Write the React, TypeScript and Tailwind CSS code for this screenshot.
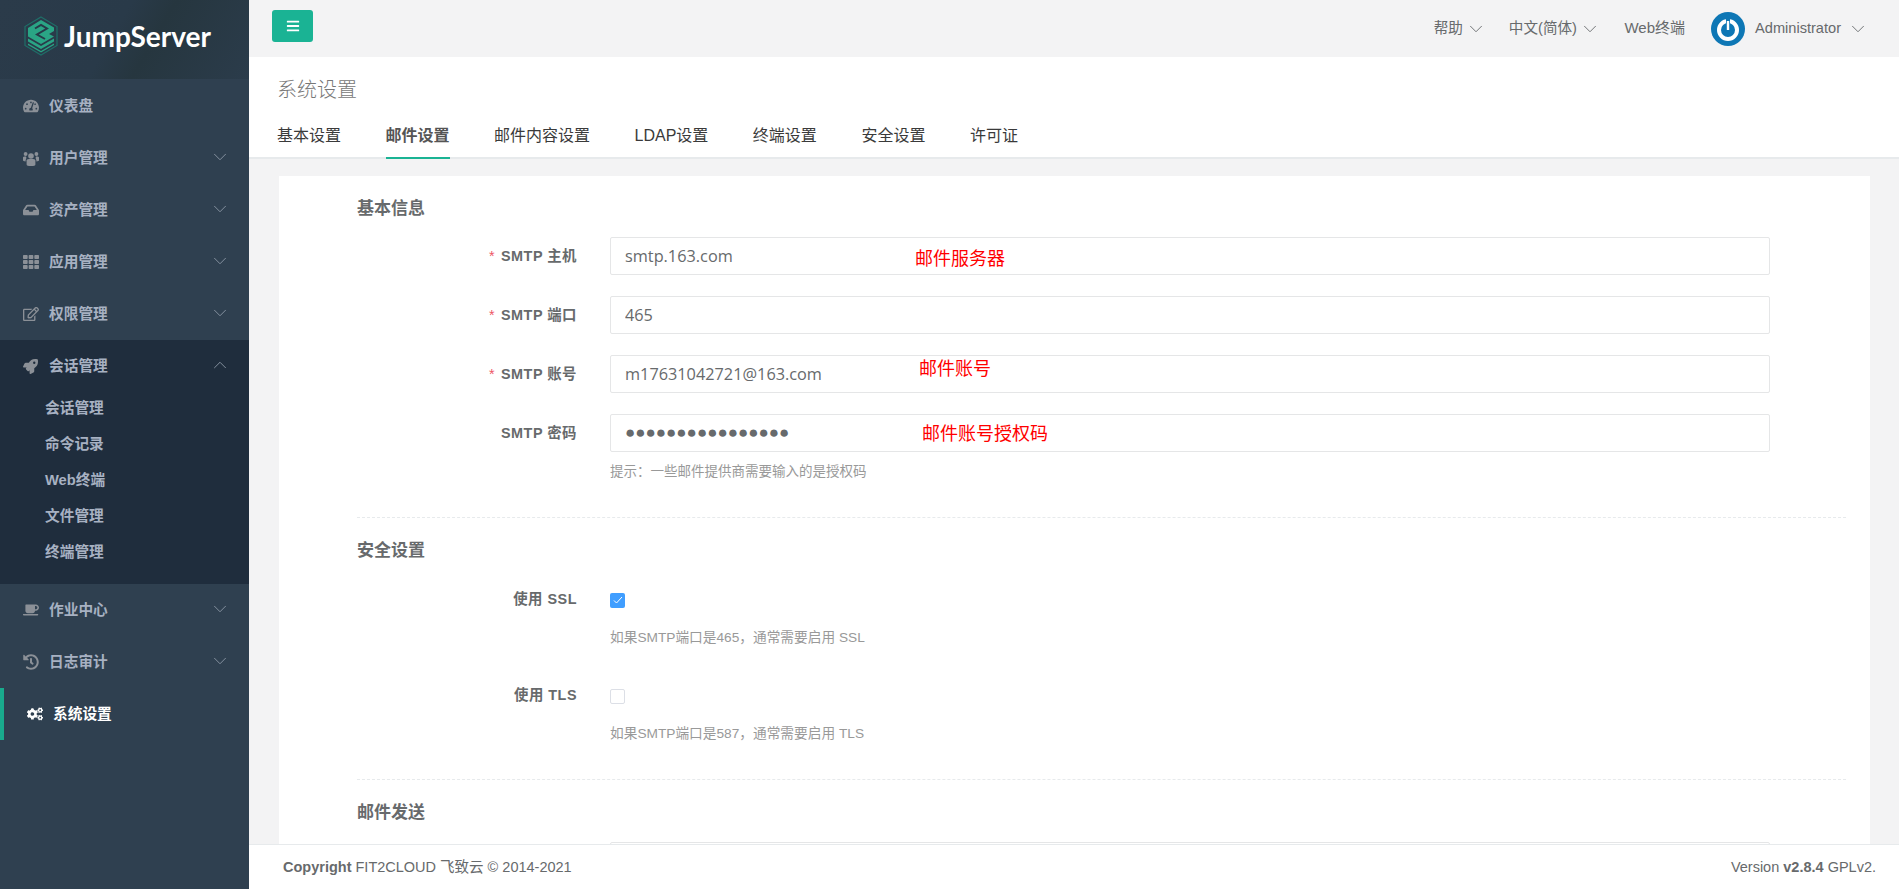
import { ChevronDown, ChevronUp } from 'lucide-react';
import {
  FaBars,
  FaCoffee,
  FaCogs,
  FaHistory,
  FaInbox,
  FaRegEdit,
  FaRocket,
  FaTachometerAlt,
  FaTh,
} from 'react-icons/fa';

const sans = 'font-["Liberation_Sans","Noto_Sans_CJK_SC",sans-serif]';

function Logo() {
  return (
    <svg width="34" height="40" viewBox="0 0 34 40" className="shrink-0">
      <path d="M17 1 33 10.5V29.5L17 39 1 29.5V10.5Z" fill="none" stroke="#1f6f68" strokeWidth="1.200" />
      <path d="M17 4 30 11.500V15L25 18 30 20.500 17 28 4 20.500V12Z" fill="#2aa585" />
      <path d="M11 12.500 17 9 23 12.500 13 18.500 21 23" fill="none" stroke="#263a48" strokeWidth="2" />
      <path d="M4 22.500 17 30 30 22.500V25.500L17 33 4 25.500Z" fill="#2aa585" />
      <path d="M4 27.500 17 35 30 27.500V29L17 36.500 4 29Z" fill="#2aa585" />
    </svg>
  );
}

function Avatar() {
  return (
    <svg width="34" height="34" viewBox="0 0 34 34" className="shrink-0">
      <circle cx="17" cy="17" r="17" fill="#0e77b5" />
      <circle cx="17" cy="18" r="9" fill="none" stroke="#ffffff" strokeWidth="4" />
      <rect x="15" y="6" width="4" height="12" fill="#0e77b5" />
      <rect x="15.800" y="9" width="2.400" height="9" fill="#ffffff" />
    </svg>
  );
}

function GroupIcon() {
  return (
    <svg width="16" height="15" viewBox="0 0 16 15" fill="currentColor">
      <circle cx="8" cy="5" r="2.800" />
      <circle cx="2.600" cy="3" r="1.900" />
      <circle cx="13.400" cy="3" r="1.900" />
      <path d="M3.600 9.500C3.600 8 5 8 8 8S12.400 8 12.400 9.500V13.500C12.400 14.500 11 15 8 15S3.600 14.500 3.600 13.500Z" />
      <path d="M0 6.500C0 5.500 1.500 5.300 3 5.400 3.800 7 3 7.500 2.600 9.500V10.500C1 10.500 0 10 0 9.300Z" />
      <path d="M16 6.500C16 5.500 14.500 5.300 13 5.400 12.200 7 13 7.500 13.400 9.500V10.500C15 10.500 16 10 16 9.300Z" />
    </svg>
  );
}

type NavItem = { label: string; icon: React.ReactNode; chevron?: boolean };

function NavRow({ label, icon, chevron = true }: NavItem) {
  return (
    <div className="flex h-[52px] items-center pl-[23px] pr-[18px] text-[14.700px] font-semibold text-[#a7b1c2]">
      <span className="flex w-[26px] shrink-0 items-center text-[16px] text-[#8b9097]">{icon}</span>
      <span>{label}</span>
      {chevron && <ChevronDown size={22} strokeWidth={1} className="ml-auto -translate-y-[1px] text-[#8b97a5]" />}
    </div>
  );
}

function Sidebar() {
  const top: NavItem[] = [
    { label: '用户管理', icon: <GroupIcon /> },
    { label: '资产管理', icon: <FaInbox /> },
    { label: '应用管理', icon: <FaTh /> },
    { label: '权限管理', icon: <FaRegEdit /> },
  ];
  const sub = ['会话管理', '命令记录', 'Web终端', '文件管理', '终端管理'];

  return (
    <aside className="flex h-full w-[249px] shrink-0 flex-col bg-[#2f4050]">
      <div className="flex h-[79px] items-center gap-[6px] bg-[linear-gradient(120deg,#2b3b4a_0%,#293a49_45%,#26363f_60%,#2b3c4b_100%)] pb-[7px] pl-[24px]">
        <Logo />
        <span className='font-["Lato",sans-serif] text-[28px] leading-none font-bold text-white'>JumpServer</span>
      </div>
      <div className="flex flex-col pt-[1px]">
        <NavRow label="仪表盘" icon={<FaTachometerAlt />} chevron={false} />
        {top.map((item) => (
          <NavRow key={item.label} {...item} />
        ))}
      </div>
      <div className="h-[244px] bg-[#1f2d3d]">
        <div className="flex h-[52px] items-center pl-[23px] pr-[18px] text-[14.700px] font-semibold text-[#a7b1c2]">
          <span className="flex w-[26px] shrink-0 items-center text-[15px] text-[#8b9097]">
            <FaRocket />
          </span>
          <span>会话管理</span>
          <ChevronUp size={22} strokeWidth={1} className="ml-auto -translate-y-[1px] text-[#8b97a5]" />
        </div>
        <div className="-mt-[2px] flex flex-col">
          {sub.map((s) => (
            <div key={s} className="flex h-[36px] items-center pl-[45px] text-[14.700px] font-semibold text-[#a7b1c2]">
              {s}
            </div>
          ))}
        </div>
      </div>
      <NavRow label="作业中心" icon={<FaCoffee />} />
      <NavRow label="日志审计" icon={<FaHistory />} />
      <div className="flex h-[52px] items-center border-l-4 border-[#19aa8d] pl-[23px] text-[14.700px] font-semibold text-white">
        <span className="flex w-[26px] shrink-0 items-center text-[16px]">
          <FaCogs />
        </span>
        <span>系统设置</span>
      </div>
    </aside>
  );
}

function TopBar() {
  return (
    <div className="flex h-[57px] shrink-0 items-center justify-between bg-[#f3f3f4] pb-[5px] pl-[23px] pr-[30px]">
      <button className="flex h-[32px] w-[41px] items-center justify-center rounded-[3px] bg-[#1ab394] text-[14px] text-white">
        <FaBars />
      </button>
      <div className="flex items-center pt-[5px] text-[14.600px] text-[#676a6c]">
        <span>帮助</span>
        <ChevronDown size={22} strokeWidth={1} className="ml-[2px]" />
        <span className="ml-[22px]">中文(简体)</span>
        <ChevronDown size={22} strokeWidth={1} className="ml-[2px]" />
        <span className="ml-[23.500px] text-[15px]">Web终端</span>
        <span className="ml-[26px]">
          <Avatar />
        </span>
        <span className="ml-[10px]">Administrator</span>
        <ChevronDown size={22} strokeWidth={1} className="ml-[6px]" />
      </div>
    </div>
  );
}

function PageHeader() {
  const tabs = ['基本设置', '邮件设置', '邮件内容设置', 'LDAP设置', '终端设置', '安全设置', '许可证'];
  return (
    <div className="h-[102px] shrink-0 border-b-2 border-[#e7eaec] bg-white px-[28px]">
      <h2 className="pt-[22px] text-[20px] leading-[22px] font-light text-[#777777]">系统设置</h2>
      <div className="mt-[18px] flex gap-[44.500px]">
        {tabs.map((t, i) => (
          <div
            key={t}
            className={
              i === 1
                ? 'relative h-[38px] pt-[6px] text-[16px] leading-[22px] font-semibold text-[#555555]'
                : 'h-[38px] pt-[6px] text-[16px] leading-[22px] text-[#3a3a3a]'
            }
          >
            {t}
            {i === 1 && <span className="absolute right-0 -bottom-[2px] left-0 h-[2px] bg-[#1ab394]" />}
          </div>
        ))}
      </div>
    </div>
  );
}

function Heading({ children }: { children: React.ReactNode }) {
  return <h3 className="text-[17px] leading-[20px] font-bold text-[#676a6c]">{children}</h3>;
}

type FieldProps = {
  label: string;
  value: string;
  required?: boolean;
  dots?: boolean;
  note?: string;
  noteClass?: string;
};

function Field({ label, value, required, dots, note, noteClass }: FieldProps) {
  return (
    <div className="mb-[21px] flex items-center">
      <label className="w-[253px] shrink-0 pt-[2px] pr-[33px] text-right text-[14.400px] font-bold tracking-[0.5px] text-[#676a6c]">
        {required && <span className="mr-[6px] font-normal text-[#ed5565]">*</span>}
        {label}
      </label>
      <div className="relative w-[1160px]">
        <input
          readOnly
          type="text"
          value={value}
          className={
            dots
              ? 'block h-[38px] w-full rounded-[2px] border border-[#e5e6e7] bg-white px-[14px] font-["Liberation_Sans",sans-serif] text-[17px] text-[#676a6c] outline-none'
              : 'block h-[38px] w-full rounded-[2px] border border-[#e5e6e7] bg-white px-[14px] font-["Open_Sans",sans-serif] text-[16.300px] text-[#676a6c] outline-none'
          }
        />
        {note && <span className={noteClass}>{note}</span>}
      </div>
    </div>
  );
}

function CheckRow({ label, checked, hint }: { label: string; checked?: boolean; hint: string }) {
  return (
    <div>
      <div className="flex h-[38px] items-center">
        <label className="w-[253px] shrink-0 pr-[33px] text-right text-[14.400px] font-bold tracking-[0.5px] text-[#676a6c]">
          {label}
        </label>
        {checked ? (
          <span className="flex h-[15px] w-[15px] items-center justify-center rounded-[2px] bg-[#409eff]">
            <svg width="10" height="8" viewBox="0 0 10 8">
              <path d="M1 4.500 3.500 7 9 1" fill="none" stroke="#ffffff" strokeWidth="1" />
            </svg>
          </span>
        ) : (
          <span className="h-[15px] w-[15px] rounded-[2px] border border-[#dcdfe6] bg-white" />
        )}
      </div>
      <p className="mt-[9px] ml-[253px] text-[13.700px] leading-[20px] text-[#999999]">{hint}</p>
    </div>
  );
}

function Divider() {
  return <div className="mt-[35px] mb-[23px] border-t border-dashed border-[#e7eaec]" />;
}

function Form() {
  return (
    <div className="flex-1 overflow-hidden bg-[#f3f3f4] pt-[17px] pr-[29px] pl-[30px]">
      <div className="bg-white pt-[23px] pr-[24px] pl-[78px]">
        <Heading>基本信息</Heading>
        <div className="mt-[18px]">
          <Field
            required
            label="SMTP 主机"
            value="smtp.163.com"
            note="邮件服务器"
            noteClass="absolute top-[9px] left-[305px] text-[18px] leading-[26px] text-[#ff0000]"
          />
          <Field required label="SMTP 端口" value="465" />
          <Field
            required
            label="SMTP 账号"
            value="m17631042721@163.com"
            note="邮件账号"
            noteClass="absolute top-[1px] left-[309px] text-[18px] leading-[26px] text-[#ff0000]"
          />
          <Field
            dots
            label="SMTP 密码"
            value="●●●●●●●●●●●●●●●●"
            note="邮件账号授权码"
            noteClass="absolute top-[7px] left-[312px] text-[18px] leading-[26px] text-[#ff0000]"
          />
        </div>
        <p className="-mt-[11px] ml-[253px] text-[13.500px] leading-[20px] text-[#999999]">提示：一些邮件提供商需要输入的是授权码</p>
        <Divider />
        <Heading>安全设置</Heading>
        <div className="mt-[20px]">
          <CheckRow label="使用 SSL" checked hint="如果SMTP端口是465，通常需要启用 SSL" />
        </div>
        <div className="mt-[29px]">
          <CheckRow label="使用 TLS" hint="如果SMTP端口是587，通常需要启用 TLS" />
        </div>
        <Divider />
        <Heading>邮件发送</Heading>
        <div className="mt-[19px] ml-[253px] h-[38px] w-[1160px] rounded-[2px] border border-[#e5e6e7]" />
      </div>
    </div>
  );
}

function Footer() {
  return (
    <div className="flex h-[45px] shrink-0 items-center justify-between border-t border-[#e7eaec] bg-white pt-[1px] pr-[23px] pl-[34px] text-[14.500px] text-[#676a6c]">
      <span>
        <b>Copyright</b> FIT2CLOUD 飞致云 © 2014-2021
      </span>
      <span>
        Version <b>v2.8.4</b> GPLv2.
      </span>
    </div>
  );
}

export default function App() {
  return (
    <div className={`flex h-screen overflow-hidden bg-[#f3f3f4] ${sans}`}>
      <Sidebar />
      <main className="flex min-w-0 flex-1 flex-col">
        <TopBar />
        <PageHeader />
        <Form />
        <Footer />
      </main>
    </div>
  );
}
